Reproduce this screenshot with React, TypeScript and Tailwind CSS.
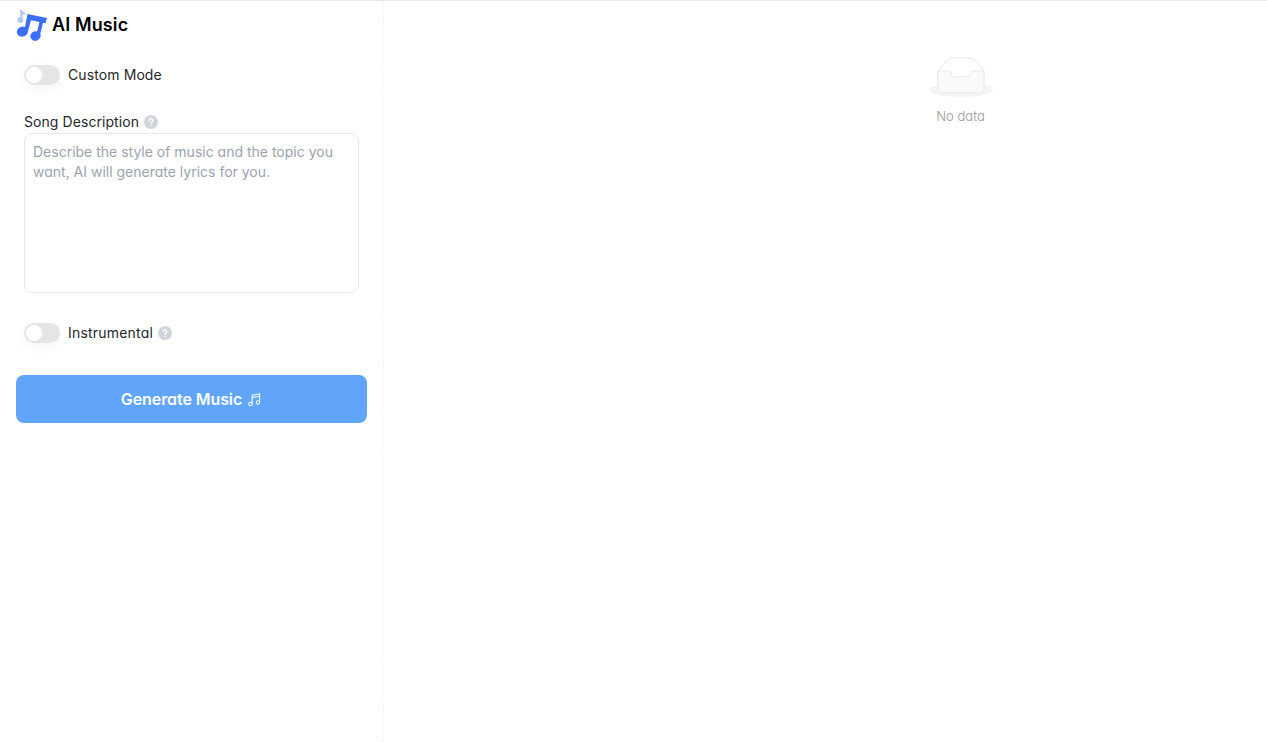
const FONT = "font-['Inter',sans-serif] [font-feature-settings:'cv11']"

function HelpDot() {
  return (
    <svg width="14" height="14" viewBox="0 0 14 14" className="shrink-0">
      <circle cx="7" cy="7" r="7" fill="#d1d5db" />
      <path d="M5.2 5.500a1.800 1.800 0 1 1 2.700 1.600c-.6.350-.9.650-.9 1.200" fill="none" stroke="#fff" strokeWidth="1.300" strokeLinecap="round" />
      <circle cx="7" cy="10.200" r=".8" fill="#fff" />
    </svg>
  )
}

function Toggle() {
  return (
    <div className="w-9 h-5 rounded-full bg-[#e5e5e5] p-[2px] shadow-[0_4px_12px_rgba(0,0,0,0.04)]">
      <div className="w-4 h-4 rounded-full bg-white" />
    </div>
  )
}

function Logo() {
  return (
    <svg width="32" height="32" viewBox="0 0 32 32" className="shrink-0">
      <path d="M4.800 1.500c.4 1.600 2.600 1.800 3.400 3-1 .4-2.100.2-2.900-.3l.3 6.500" fill="none" stroke="#b3c9f5" strokeWidth="2" strokeLinecap="round" />
      <circle cx="4.300" cy="11" r="3" fill="#b3c9f5" />
      <path d="M11.500 5 31 9l-1.500 5.200-14.500-3-3.300 12-3.600-.8z" fill="#3b6ef6" />
      <path d="M28 9.500 23.800 27l-3.600-.8L24.500 9z" fill="#3b6ef6" />
      <ellipse cx="6.400" cy="22.600" rx="5.600" ry="5" transform="rotate(-20 6.400 22.600)" fill="#3b6ef6" />
      <ellipse cx="19.500" cy="27" rx="5.200" ry="4.700" transform="rotate(-20 19.500 27)" fill="#3b6ef6" />
    </svg>
  )
}

function EmptyInbox() {
  return (
    <svg width="64" height="41" viewBox="0 0 64 41">
      <ellipse cx="32" cy="33" rx="32" ry="7" fill="#f5f5f5" />
      <path d="M55 13.800 44.900 2.300C44.400 1.500 43.700 1 43 1H21c-.7 0-1.400.5-1.900 1.300L9 13.800V23h46z" fill="none" stroke="#e7e7e7" />
      <path d="M41.600 16.900c0-1.600 1-2.900 2.200-2.900H55v18.100c0 2.100-1.300 3.900-3 3.900H12c-1.700 0-3-1.800-3-3.900V14h11.200c1.200 0 2.200 1.300 2.200 2.900s1 2.900 2.200 2.900h14.800c1.200 0 2.200-1.300 2.200-2.900z" fill="#fafafa" stroke="#e7e7e7" />
    </svg>
  )
}

export default function App() {
  return (
    <div className={`${FONT} h-[742px] overflow-hidden bg-white border-t border-[#e5e7eb] flex`}>
      {/* left form */}
      <aside className="w-[384px] shrink-0 border-r border-dashed border-[#f3f4f6] px-4">
        <div className="flex items-center gap-[4px] h-[48px] pb-[1px]">
          <Logo />
          <span className="text-[18px] font-semibold tracking-[0.12px] text-black">AI Music</span>
        </div>

        <div className="px-2 mt-4 flex items-center gap-2 h-5">
          <Toggle />
          <span className="text-sm tracking-[0.1px] text-[#27272a]">Custom Mode</span>
        </div>

        <div className="px-2 mt-[27px] flex items-center gap-[5px] h-5">
          <span className="text-sm tracking-[0.07px] text-[#27272a]">Song Description</span>
          <HelpDot />
        </div>

        <div className="mx-2 mt-[1px] w-[335px] h-[160px] rounded-lg border border-[#e5e7eb] p-2 text-sm leading-5 text-[#9ca3af]">
          Describe the style of music and the topic you want, AI will generate lyrics for you.
        </div>

        <div className="px-2 mt-[30px] flex items-center gap-[5px] h-5">
          <Toggle />
          <span className="ml-[3px] text-sm tracking-[0.2px] text-[#27272a]">Instrumental</span>
          <HelpDot />
        </div>

        <button className="mt-[32px] w-[351px] h-12 rounded-lg bg-[#60a5fa] flex items-center justify-center gap-[5px] text-base font-semibold tracking-[-0.08px] text-white">
          Generate Music
          <svg width="15" height="15" viewBox="0 0 16 16" fill="none" stroke="#fff" strokeWidth="1.100">
            <path d="M5.500 12.500V3.500l8-1.500v9" />
            <path d="M5.500 6l8-1.500" />
            <circle cx="3.700" cy="12.700" r="1.800" />
            <circle cx="11.700" cy="11.200" r="1.800" />
          </svg>
        </button>
      </aside>

      {/* results */}
      <main className="flex-1 flex flex-col items-center pt-[56px] pl-[270px]">
        <EmptyInbox />
        <p className="mt-[8px] text-[13px] leading-5 font-light text-[#999999]">No data</p>
      </main>
    </div>
  )
}
